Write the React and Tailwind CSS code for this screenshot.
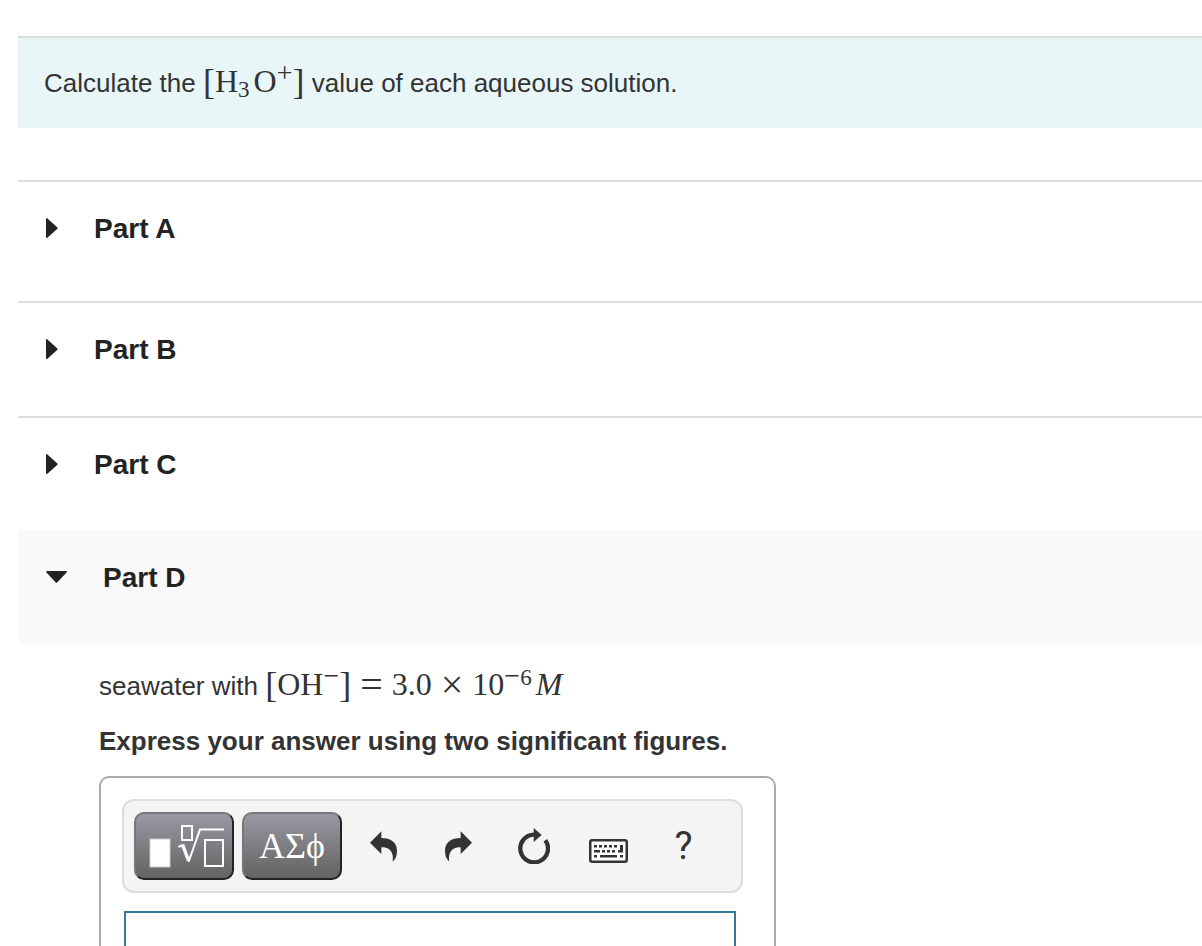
// src/pages/AqueousSolutions.jsx
import React, { useState } from "react";

const CaretRight = () => (
  <svg viewBox="0 0 12 20" className="w-3 h-5 mb-[3px]" fill="#222" aria-hidden="true">
    <path d="M0 1Q0 -.4 1.4 .4L11.4 9.4Q12 10 11.4 10.8L1.4 19.8Q0 20.4 0 19Z" />
  </svg>
);

const CaretDown = () => (
  <svg viewBox="0 0 21 12" className="w-[21px] h-3 mb-[3px]" fill="#222" aria-hidden="true">
    <path d="M1 0Q-.4 .2 .5 1.4L9.8 11.4Q10.5 12 11.2 11.4L20.5 1.4Q21.4 .2 20 0Z" />
  </svg>
);

const TemplatesIcon = () => (
  <svg viewBox="-6 0 82 45" className="w-[82px] h-[45px]" fill="none" stroke="#fff" aria-hidden="true">
    <rect x="1" y="15" width="20" height="28" fill="#fff" stroke="#ccc" strokeWidth="1" />
    <rect x="33" y="2" width="10" height="14" strokeWidth="2" />
    <rect x="56" y="16" width="18" height="26" strokeWidth="2" />
    <path d="M29.5 23l4-2" strokeWidth="2" />
    <path d="M33.5 20.5l6 16" strokeWidth="3.5" />
    <path d="M39.5 38l11.5-32.5H75" strokeWidth="2" />
  </svg>
);

const ARROW = "M0 35L34 1V21C62 21 81 34 81 59C81 74 77 84 68 92C71 73 67 49 34 49V69Z";

const UndoIcon = () => (
  <svg viewBox="0 0 81 93" className="w-[27px] h-[31px]" fill="#333" aria-hidden="true">
    <path d={ARROW} />
  </svg>
);

const RedoIcon = () => (
  <svg viewBox="0 0 81 93" className="w-[27px] h-[31px]" fill="#333" aria-hidden="true">
    <path transform="translate(81 0) scale(-1 1)" d={ARROW} />
  </svg>
);

const ResetIcon = () => (
  <svg viewBox="0 0 96 108" className="w-8 h-9" aria-hidden="true">
    <path d="M48 20A41.5 41.5 0 1 0 82 37" fill="none" stroke="#333" strokeWidth="13" />
    <path d="M47 0L71 21L47 42Z" fill="#333" />
  </svg>
);

// keys: [x, y, width]
const KEYS = [
  [5, 16, 3], [10, 16, 3], [15, 16, 3], [20, 16, 3], [25, 16, 3],
  [5, 21, 6], [13, 21, 3], [18, 21, 3], [23, 21, 3],
  [5, 26, 3], [11, 26, 17], [31, 26, 3],
];

const KeyboardIcon = () => (
  <svg viewBox="0 0 39 34" className="w-[39px] h-[34px]" aria-hidden="true">
    <rect x="1.25" y="11.25" width="36.5" height="21.5" rx="2" fill="#fff" stroke="#333" strokeWidth="2.5" />
    {KEYS.map(([x, y, w]) => (
      <rect key={`${x}-${y}`} x={x} y={y} width={w} height="2.5" fill="#333" />
    ))}
    <path d="M31 16h3v7.5h-5v-2.5h2Z" fill="#333" />
  </svg>
);

const Formula = ({ children }) => (
  <span className="font-['Liberation_Serif',serif] text-[32px] leading-none">{children}</span>
);
const Bracket = ({ children }) => (
  <span className="align-[-2px] text-[36px] leading-none">{children}</span>
);
const Op = ({ children }) => (
  <span className="mx-[9px] align-[-3px] text-[40px] leading-none">{children}</span>
);
const SupSign = ({ children }) => (
  <span className="align-[10px] text-[28px] leading-none">{children}</span>
);

const collapsedParts = [
  { name: "Part A", spacing: "pb-[53px]" },
  { name: "Part B", spacing: "pb-[47px]" },
  { name: "Part C", spacing: "pb-[47px]" },
];

const tools = [
  { label: "Undo", Icon: UndoIcon },
  { label: "Redo", Icon: RedoIcon },
  { label: "Reset", Icon: ResetIcon },
  { label: "Keyboard shortcuts", Icon: KeyboardIcon },
];

const AqueousSolutions = () => {
  const [answer, setAnswer] = useState("");

  return (
    <main className="min-h-screen flex flex-col bg-white pt-9 pl-[18px] font-['Liberation_Sans',Arial,sans-serif] text-[26px] text-[#333]">
      <div className="border-t-2 border-[#ddd] bg-[#e8f6f7] py-[15px] pl-[26px] mb-[52px]">
        <p className="leading-[60px]">
          Calculate the{" "}
          <Formula>
            <Bracket>[</Bracket>H
            <span className="align-[-5px] text-[23px] leading-none mr-1">3</span>O
            <SupSign>+</SupSign>
            <Bracket>]</Bracket>
          </Formula>{" "}
          value of each aqueous solution.
        </p>
      </div>

      {collapsedParts.map((part) => (
        <h2 key={part.name} className={`border-t-2 border-[#ddd] pt-7 pl-7 ${part.spacing}`}>
          <button
            type="button"
            aria-expanded="false"
            className="flex items-center gap-9 text-[28px] leading-[38px] font-bold text-[#222]"
          >
            <CaretRight />
            {part.name}
          </button>
        </h2>
      ))}

      <h2 className="bg-[#f9f9f9] pt-7 pl-7 pb-[47px]">
        <button
          type="button"
          aria-expanded="true"
          className="flex items-center gap-9 text-[28px] leading-[38px] font-bold text-[#222]"
        >
          <CaretDown />
          Part D
        </button>
      </h2>

      <section className="flex-1 flex flex-col pl-[81px] pt-3">
        <p className="leading-[60px]">
          seawater with{" "}
          <Formula>
            <Bracket>[</Bracket>OH
            <SupSign>−</SupSign>
            <Bracket>]</Bracket>
            <Op>=</Op>3.0<Op>×</Op>10
            <SupSign>−</SupSign>
            <span className="align-[10px] text-[23px] leading-none mr-1">6</span>
            <i>M</i>
          </Formula>
        </p>
        <p className="mt-[10px] mb-5 leading-[30px] font-bold">
          Express your answer using two significant figures.
        </p>

        <div className="flex-1 flex flex-col w-full max-w-[677px] border-2 border-b-0 border-[#aaa] rounded-t-[10px] pt-[21px] pl-[21px] pr-[31px]">
          <div className="flex items-center border-2 border-[#ddd] rounded-xl bg-[#f4f4f4] px-[10px] py-[11px]">
            <div className="flex gap-2 mr-1">
              <button
                type="button"
                aria-label="Templates"
                className="flex items-center justify-center w-[100px] h-[68px] rounded-[10px] border-2 border-t-[#777] border-l-[#777] border-r-[#222] border-b-[#222] bg-linear-to-b from-[#9a98a2] to-[#636363]"
              >
                <TemplatesIcon />
              </button>
              <button
                type="button"
                className="w-[100px] h-[68px] rounded-[10px] border-2 border-t-[#777] border-l-[#777] border-r-[#222] border-b-[#222] bg-linear-to-b from-[#9a98a2] to-[#636363] font-['Liberation_Serif',serif] text-[36px] leading-none text-white"
              >
                ΑΣϕ
              </button>
            </div>
            {tools.map(({ label, Icon }) => (
              <button
                key={label}
                type="button"
                aria-label={label}
                className="flex items-center justify-center w-[75px] h-[68px]"
              >
                <Icon />
              </button>
            ))}
            <button
              type="button"
              aria-label="Help"
              className="w-[75px] h-[68px] font-[Roboto,sans-serif] text-[38px] leading-none"
            >
              ?
            </button>
          </div>

          <input
            type="text"
            aria-label="Answer"
            value={answer}
            onChange={(e) => setAnswer(e.target.value)}
            className="flex-1 mt-[18px] ml-[2px] mr-[7px] border-2 border-b-0 border-[#337a99] bg-white px-2"
          />
        </div>
      </section>
    </main>
  );
};

export default AqueousSolutions;
